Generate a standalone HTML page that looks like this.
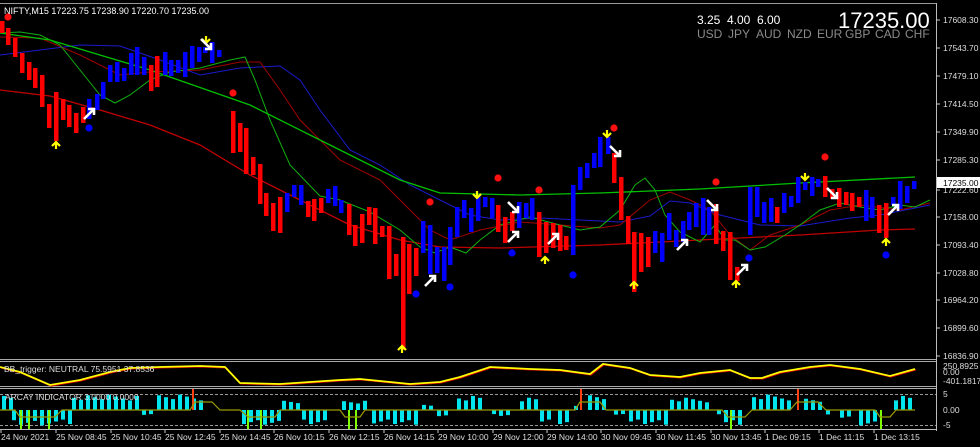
<!DOCTYPE html>
<html><head><meta charset="utf-8"><style>
html,body{margin:0;padding:0;background:#000;width:980px;height:447px;overflow:hidden}
svg{display:block;font-family:"Liberation Sans",sans-serif}
</style></head><body>
<svg id="s" width="980" height="447" xmlns="http://www.w3.org/2000/svg">
<rect width="980" height="447" fill="#000"/>
<line x1="0" y1="3.5" x2="936" y2="3.5" stroke="#9a9a9a"/>
<line x1="936.5" y1="3" x2="936.5" y2="431" stroke="#bbb"/>
<line x1="0" y1="359.5" x2="936" y2="359.5" stroke="#aaa"/>
<line x1="0" y1="361.5" x2="936" y2="361.5" stroke="#aaa"/>
<line x1="0" y1="386.5" x2="936" y2="386.5" stroke="#aaa"/>
<line x1="0" y1="388.5" x2="936" y2="388.5" stroke="#aaa"/>
<line x1="0" y1="429.5" x2="936" y2="429.5" stroke="#bbb"/>
<line x1="0" y1="394.5" x2="936" y2="394.5" stroke="#999" stroke-dasharray="3,2"/>
<line x1="0" y1="425.5" x2="936" y2="425.5" stroke="#999" stroke-dasharray="3,2"/>
<g id="g"></g>
<text x="4" y="14" fill="#fff" font-size="9">NIFTY,M15  17223.75 17238.90 17220.70 17235.00</text>
<g fill="#fff" font-size="12"><text x="697" y="24">3.25</text><text x="727" y="24">4.00</text><text x="757" y="24">6.00</text></g>
<g fill="#8a8a8a" font-size="12"><text x="697" y="38">USD</text><text x="728" y="38">JPY</text><text x="756" y="38">AUD</text><text x="787" y="38">NZD</text><text x="817" y="38">EUR</text><text x="845" y="38">GBP</text><text x="875" y="38">CAD</text><text x="905" y="38">CHF</text></g>
<text x="838" y="28" fill="#fff" font-size="22">17235.00</text>
<text x="4" y="372" fill="#ddd" font-size="8.5">BB_trigger: NEUTRAL 75.5951 37.8536</text>
<text x="5" y="400" fill="#ddd" font-size="8.5">ARCAY INDICATOR 3.0000 0.0000</text>
</svg>
<script>
var g=document.getElementById('g'),h='';
function P(pts,c,w){h+='<polyline fill="none" stroke="'+c+'" stroke-width="'+(w||1)+'" points="'+pts.map(function(p){return p.join(',')}).join(' ')+'"/>';}
var B=[[0,21,33,'r'],[6,28,45,'r'],[13,38,57,'r'],[20,53,73,'r'],[27,62,80,'r'],[33,68,88,'r'],[40,75,107,'r'],[47,104,128,'r'],[54,92,141,'r'],[61,99,120,'r'],[67,105,127,'r'],[74,113,133,'r'],[81,107,123,'r'],[87,99,119,'b'],[95,94,110,'b'],[101,82,99,'b'],[108,65,82,'b'],[115,62,82,'b'],[122,68,81,'b'],[129,53,75,'b'],[135,47,75,'b'],[142,57,75,'b'],[149,65,91,'r'],[155,56,87,'r'],[163,52,75,'b'],[169,60,76,'b'],[176,60,73,'b'],[183,52,77,'b'],[190,46,68,'b'],[197,47,62,'b'],[203,47,53,'b'],[210,42,63,'b'],[217,50,57,'b'],
[231,111,153,'r'],[238,123,152,'r'],[244,128,174,'r'],[251,157,175,'r'],[258,164,204,'r'],[264,193,216,'r'],[271,203,231,'r'],[278,197,233,'r'],[285,193,212,'b'],[292,185,197,'b'],[299,185,205,'b'],[306,201,217,'r'],[312,199,221,'r'],[319,198,213,'r'],[326,189,203,'b'],[333,186,206,'b'],[339,200,213,'b'],[347,204,235,'r'],[353,225,246,'r'],[360,214,243,'r'],[367,207,225,'r'],[373,208,244,'r'],[380,226,237,'r'],[387,226,279,'r'],[394,254,276,'r'],[401,237,350,'r'],[407,244,294,'r'],[414,248,276,'r'],[421,221,253,'b'],[428,225,274,'b'],[435,247,273,'b'],
[442,247,281,'b'],[448,227,265,'b'],[455,207,237,'b'],[462,200,218,'b'],[469,208,232,'b'],[476,195,221,'b'],[483,197,207,'b'],[490,198,218,'b'],[496,205,232,'r'],[503,217,243,'r'],[510,212,231,'r'],[517,202,228,'b'],[524,203,218,'b'],[530,198,220,'b'],[537,212,257,'r'],[544,222,253,'r'],[551,223,248,'r'],[558,225,251,'r'],[564,236,250,'r'],[571,185,255,'b'],[578,167,190,'b'],[585,163,178,'b'],[592,153,168,'b'],[598,137,167,'b'],[606,137,154,'b'],[612,153,183,'r'],[619,177,220,'r'],[626,216,244,'r'],[632,232,292,'r'],[639,233,272,'r'],[646,237,267,'r'],[653,231,253,'b'],[660,233,262,'b'],[667,213,240,'b'],[674,230,247,'b'],[681,221,242,'b'],[687,212,230,'b'],[694,203,227,'b'],[701,198,235,'b'],[707,207,235,'b'],[714,204,244,'r'],[721,231,251,'r'],[728,232,280,'r'],[735,267,281,'r'],[748,187,235,'b'],[755,187,217,'b'],[762,202,223,'b'],[769,198,222,'b'],[775,207,223,'r'],[782,193,213,'b'],[789,196,207,'b'],[796,177,203,'b'],[803,182,190,'b'],[810,177,196,'b'],[816,179,187,'b'],[823,176,197,'r'],[830,189,199,'r'],[837,188,207,'r'],[844,192,205,'r'],[850,193,211,'r'],[857,197,207,'r'],[864,190,221,'b'],[870,197,218,'b'],[877,205,233,'r'],[884,203,238,'r'],[891,197,205,'b'],[898,181,209,'b'],[905,186,203,'b'],[912,181,189,'b']];
P([[0,90],[50,96],[100,110],[150,125],[200,145],[250,175],[300,200],[350,225],[400,240],[440,247],[500,248],[600,245],[700,240],[800,235],[880,230],[915,229]],'#c00000',1.3);
P([[0,55],[40,50],[80,45],[120,46],[160,60],[200,75],[240,68],[280,66],[300,80],[320,110],[350,150],[380,165],[410,185],[440,200],[470,215],[500,220],[540,218],[580,220],[620,222],[650,216],[670,201],[690,203],[720,215],[760,225],[800,226],[850,218],[880,215],[930,205]],'#1a1acc',1);
P([[0,37],[40,38],[80,55],[120,75],[150,72],[200,70],[240,62],[260,62],[280,90],[300,120],[340,160],[380,180],[410,210],[430,230],[450,240],[480,230],[520,222],[560,225],[600,228],[620,225],[650,200],[670,192],[690,200],[710,210],[730,235],[750,250],[770,235],[800,225],[830,210],[860,205],[900,210],[930,203]],'#a00000',1);
P([[0,33],[20,32],[40,35],[60,45],[80,70],[100,95],[115,103],[130,95],[150,80],[170,72],[200,68],[230,60],[245,57],[255,80],[270,120],[290,165],[320,196],[340,200],[370,212],[400,230],[420,247],[435,253],[450,247],[466,253],[480,240],[500,225],[530,217],[560,225],[580,230],[600,227],[620,210],[635,185],[645,178],[655,190],[665,215],[680,232],[700,242],[715,225],[725,240],[735,240],[750,250],[765,247],[785,235],[800,225],[820,210],[840,203],[860,207],[880,210],[900,205],[915,207],[930,200]],'#10b010',1);
P([[0,33],[50,40],[150,70],[250,105],[330,145],[400,180],[440,193],[520,195],[600,193],[700,189],[800,183],[915,177]],'#00c000',1.3);
B.forEach(function(b){h+='<rect x="'+b[0]+'" y="'+b[1]+'" width="4.5" height="'+(b[2]-b[1])+'" fill="'+(b[3]=='r'?'#ff0000':'#0000ff')+'"/>';});
[[8,17,'r'],[233,93,'r'],[430,202,'r'],[498,178,'r'],[539,190,'r'],[614,128,'r'],[716,182,'r'],[825,157,'r'],[89,128,'b'],[416,294,'b'],[450,287,'b'],[512,253,'b'],[573,275,'b'],[749,258,'b'],[886,255,'b']].forEach(function(d){h+='<circle cx="'+d[0]+'" cy="'+d[1]+'" r="3.6" fill="'+(d[2]=='r'?'#ff1010':'#0000ff')+'"/>';});
function ya(x,y,up){var s=up?1:-1;h+='<path d="M'+x+','+(y+7*s)+' L'+x+','+y+' M'+(x-4)+','+(y+4*s)+' L'+x+','+y+' L'+(x+4)+','+(y+4*s)+'" stroke="#ffff00" stroke-width="2.2" fill="none"/>';}
[[56,142],[402,346],[545,257],[634,282],[736,281],[886,239]].forEach(function(a){ya(a[0],a[1],1)});
[[206,43],[477,198],[607,137],[805,180]].forEach(function(a){ya(a[0],a[1],0)});
function wa(x,y,dir){var s=dir;h+='<g stroke="#fff" stroke-width="2.6" fill="none"><path d="M'+(x-5)+','+(y+5*s)+' L'+(x+4)+','+(y-4*s)+'"/><path d="M'+(x-1)+','+(y-5*s)+' L'+(x+5)+','+(y-5*s)+' L'+(x+5)+','+(y+1*s)+'"/></g>';}
[[89,114],[430,281],[513,237],[553,239],[682,245],[742,270],[893,210]].forEach(function(a){wa(a[0],a[1],1)});
[[206,44],[513,207],[615,151],[712,205],[832,193]].forEach(function(a){wa(a[0],a[1],-1)});
var p1=[[0,367],[20,372],[50,385],[80,380],[110,372],[130,368],[160,367],[200,366],[225,367],[240,383],[280,384],[310,382],[340,380],[360,379],[380,381],[410,384],[440,382],[460,377],[490,367],[530,369],[560,370],[590,374],[603,364],[630,368],[650,375],[680,377],[700,373],[730,370],[750,378],[762,378],[780,372],[810,367],[830,365],[860,369],[890,376],[915,369]];
P(p1.map(function(p){return [p[0]+1,p[1]+0.8]}),'#d00000',1.5);
P(p1,'#ffff00',1.8);
var seg=[[0,10,1],[10,70,-1],[70,140,1],[140,155,-0.4],[155,200,1],[240,280,-1],[280,300,0.6],[300,330,-1],[340,370,0.6],[370,420,-1],[420,430,0.4],[435,450,-0.4],[455,485,1],[490,510,-0.4],[518,535,0.8],[538,548,-1],[556,568,-1],[572,576,0.4],[586,608,1],[612,624,-0.3],[627,665,-1],[668,711,0.8],[715,720,-0.3],[722,745,-1],[750,792,1],[802,821,0.8],[824,828,-0.3],[838,848,-0.6],[857,875,-1],[892,915,1]];
var k=0;seg.forEach(function(sg){for(var x=sg[0]+2;x<sg[1];x+=7){k++;var m=Math.abs(sg[2])*(0.6+0.4*((k*37)%10)/10)*16;var up=sg[2]>0;h+='<rect x="'+x+'" y="'+(up?410-m:410)+'" width="4" height="'+m+'" fill="#00e5ee"/>';}});
[[20],[28],[48],[247],[260],[348],[355],[730],[880]].forEach(function(a){h+='<rect x="'+a[0]+'" y="410" width="2" height="19" fill="#7fff00"/>';});
[[192],[580],[797]].forEach(function(a){h+='<rect x="'+a[0]+'" y="389" width="2" height="21" fill="#ff4010"/>';});
P([[0,410],[15,410],[20,417],[55,417],[62,410],[190,410],[195,402],[212,402],[220,410],[240,410],[248,417],[275,417],[280,410],[340,410],[345,417],[360,417],[365,410],[575,410],[580,402],[600,402],[606,410],[722,410],[728,417],[745,417],[752,410],[790,410],[797,402],[818,402],[826,410],[875,410],[880,417],[890,417],[896,410],[915,410]],'#9a9a00',1.2);
var L=['17608.30','17543.70','17479.10','17414.50','17349.90','17285.30','17222.60','17158.00','17093.40','17028.80','16964.20','16899.60','16836.90'];
var Y=[20,48,76,104,132,160,190,217,245,273,300,328,356];
L.forEach(function(t,i){h+='<line x1="936" y1="'+Y[i]+'" x2="940" y2="'+Y[i]+'" stroke="#ccc"/><text x="943" y="'+(Y[i]+3)+'" fill="#ddd" font-size="8.5">'+t+'</text>';});
h+='<rect x="937" y="177" width="43" height="11" fill="#fff"/><text x="943" y="186" fill="#000" font-size="8.5">17235.00</text>';
[['250.8925',369],['0.00',375],['-401.1817',384],['5',397],['0.00',413],['-5',428]].forEach(function(a){h+='<text x="943" y="'+a[1]+'" fill="#ddd" font-size="8.5">'+a[0]+'</text>';});
var T=['24 Nov 2021','25 Nov 08:45','25 Nov 10:45','25 Nov 12:45','25 Nov 14:45','26 Nov 10:15','26 Nov 12:15','26 Nov 14:15','29 Nov 10:00','29 Nov 12:00','29 Nov 14:00','30 Nov 09:45','30 Nov 11:45','30 Nov 13:45','1 Dec 09:15','1 Dec 11:15','1 Dec 13:15'];
var X=[0,55,110,164,219,273,328,383,437,492,546,600,655,710,764,818,873];
T.forEach(function(t,i){h+='<line x1="'+(X[i]+1)+'" y1="430" x2="'+(X[i]+1)+'" y2="433" stroke="#ccc"/><text x="'+(X[i]+1)+'" y="440" fill="#ddd" font-size="8.5">'+t+'</text>';});
g.innerHTML=h;
</script>
</body></html>
